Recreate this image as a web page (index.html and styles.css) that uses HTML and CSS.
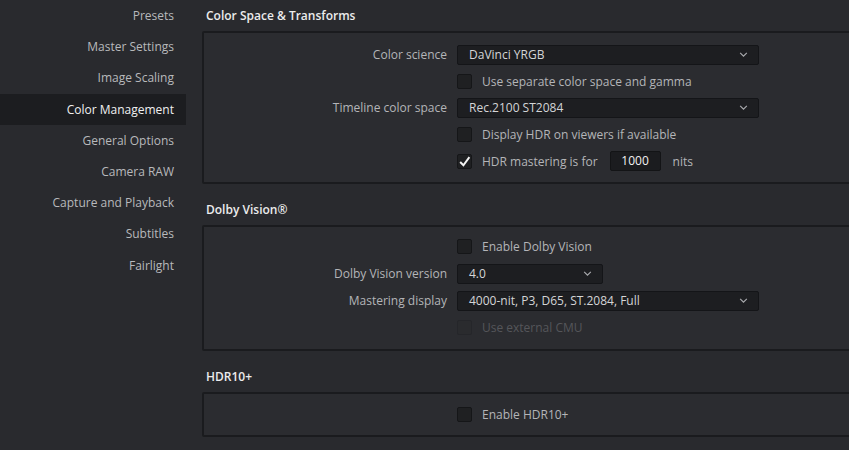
FILE: index.html
```html
<!DOCTYPE html>
<html>
<head>
<meta charset="utf-8">
<link rel="stylesheet" href="styles.css">
</head>
<body>
<div class="app">
  <nav class="sidebar">
    <div class="nav-item">Presets</div>
    <div class="nav-item">Master Settings</div>
    <div class="nav-item">Image Scaling</div>
    <div class="nav-item active">Color Management</div>
    <div class="nav-item">General Options</div>
    <div class="nav-item">Camera RAW</div>
    <div class="nav-item">Capture and Playback</div>
    <div class="nav-item">Subtitles</div>
    <div class="nav-item">Fairlight</div>
  </nav>
  <main class="main">
    <h2 class="section-title first">Color Space &amp; Transforms</h2>
    <section class="panel panel-cs">
      <div class="label">Color science</div>
      <div class="select wide"><span>DaVinci YRGB</span><svg class="chev" viewBox="0 0 10 6"><path d="M1 1 L5 5 L9 1"/></svg></div>
      <div class="label"></div>
      <label class="check"><span class="box"></span><span>Use separate color space and gamma</span></label>
      <div class="label">Timeline color space</div>
      <div class="select wide"><span>Rec.2100 ST2084</span><svg class="chev" viewBox="0 0 10 6"><path d="M1 1 L5 5 L9 1"/></svg></div>
      <div class="label"></div>
      <label class="check"><span class="box"></span><span>Display HDR on viewers if available</span></label>
      <div class="label"></div>
      <label class="check"><span class="box checked"><svg viewBox="0 0 12 12"><path d="M2 6.5 L5 9.5 L10.5 2"/></svg></span><span>HDR mastering is for</span><span class="num">1000</span><span class="unit">nits</span></label>
    </section>

    <h2 class="section-title">Dolby Vision®</h2>
    <section class="panel panel-dv">
      <div class="label"></div>
      <label class="check"><span class="box"></span><span>Enable Dolby Vision</span></label>
      <div class="label">Dolby Vision version</div>
      <div class="select short"><span>4.0</span><svg class="chev" viewBox="0 0 10 6"><path d="M1 1 L5 5 L9 1"/></svg></div>
      <div class="label">Mastering display</div>
      <div class="select wide"><span>4000-nit, P3, D65, ST.2084, Full</span><svg class="chev" viewBox="0 0 10 6"><path d="M1 1 L5 5 L9 1"/></svg></div>
      <div class="label"></div>
      <label class="check disabled"><span class="box"></span><span>Use external CMU</span></label>
    </section>

    <h2 class="section-title">HDR10+</h2>
    <section class="panel panel-hdr">
      <div class="label"></div>
      <label class="check"><span class="box"></span><span>Enable HDR10+</span></label>
    </section>
  </main>
</div>
</body>
</html>
```
FILE: styles.css
```css
* { box-sizing: border-box; }
html, body {
  margin: 0;
  padding: 0;
  background: #292a2e;
  width: 849px;
  height: 450px;
  overflow: hidden;
  font-family: "Open Sans", "Noto Sans", sans-serif;
  font-size: 12px;
  color: #b6b7ba;
}
.app {
  display: flex;
  height: 450px;
}
.sidebar {
  width: 186px;
  flex: none;
  display: flex;
  flex-direction: column;
}
.nav-item {
  height: 31.2px;
  line-height: 31.2px;
  text-align: right;
  padding-right: 12px;
  color: #b8b9bc;
  white-space: nowrap;
}
.nav-item.active {
  background: #1c1d20;
  color: #f0f0f0;
}
.main {
  flex: 1;
  padding-left: 16px;
  overflow: hidden;
  display: flex;
  flex-direction: column;
}
.section-title {
  margin: 0;
  height: 31px;
  line-height: 31px;
  padding-left: 4px;
  font-size: 12px;
  font-weight: 600;
  color: #ececec;
  flex: none;
}
.panel {
  flex: none;
  width: 700px;
  border: 2px solid #1a1b1e;
  border-radius: 2px;
  background: #2b2c30;
  display: grid;
  grid-template-columns: 243px 1fr;
  column-gap: 10px;
  align-items: center;
}
.panel + .section-title {
  margin-top: 10px;
}
.panel-cs {
  height: 153px;
  padding-top: 8.5px;
  grid-auto-rows: 26.6px;
}
.panel-dv {
  height: 126px;
  padding-top: 6px;
  grid-auto-rows: 27px;
}
.panel-hdr {
  height: 45px;
  grid-auto-rows: 41px;
}
.label {
  text-align: right;
  color: #b4b5b8;
  white-space: nowrap;
}
.select {
  height: 20px;
  background: #1d1e21;
  border: 1px solid #141518;
  border-radius: 2px;
  display: flex;
  align-items: center;
  justify-content: space-between;
  padding: 0 10px 0 11px;
  color: #d4d5d7;
}
.select.wide { width: 302px; }
.select.short { width: 146px; }
.chev {
  width: 9px;
  height: 5px;
  fill: none;
  stroke: #a9aaad;
  stroke-width: 1.4;
}
.check {
  display: flex;
  align-items: center;
  white-space: nowrap;
  color: #b4b5b8;
}
.box {
  width: 15px;
  height: 15px;
  flex: none;
  background: #1f2022;
  border: 1px solid #151618;
  border-radius: 2px;
  margin-right: 10px;
  display: flex;
  align-items: center;
  justify-content: center;
}
.box svg {
  width: 13px;
  height: 13px;
  fill: none;
  stroke: #f4f4f4;
  stroke-width: 1.8;
}
.num {
  width: 51px;
  height: 20px;
  margin-left: 12px;
  background: #1b1c1f;
  border: 1px solid #131416;
  border-radius: 2px;
  color: #f2f2f2;
  text-align: center;
  line-height: 18px;
}
.unit {
  margin-left: 12px;
}
.check.disabled { color: #55565a; }
.check.disabled .box {
  background: #2a2b2e;
  border-color: #25262a;
}
```
